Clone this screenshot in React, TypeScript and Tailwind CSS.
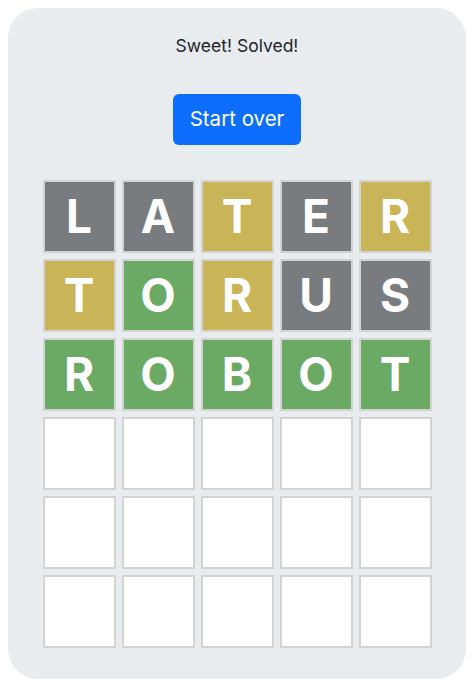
const rows: { letter: string; state: "absent" | "present" | "correct" }[][] = [
  [
    { letter: "L", state: "absent" },
    { letter: "A", state: "absent" },
    { letter: "T", state: "present" },
    { letter: "E", state: "absent" },
    { letter: "R", state: "present" },
  ],
  [
    { letter: "T", state: "present" },
    { letter: "O", state: "correct" },
    { letter: "R", state: "present" },
    { letter: "U", state: "absent" },
    { letter: "S", state: "absent" },
  ],
  [
    { letter: "R", state: "correct" },
    { letter: "O", state: "correct" },
    { letter: "B", state: "correct" },
    { letter: "O", state: "correct" },
    { letter: "T", state: "correct" },
  ],
];

const stateClass = {
  absent: "bg-[#787c7e] text-white",
  present: "bg-[#c9b458] text-white",
  correct: "bg-[#6aaa64] text-white",
};

export default function App() {
  const grid = Array.from({ length: 6 }, (_, r) => rows[r] ?? null);

  return (
    <div className="p-2 bg-white" style={{ fontFamily: "Inter, 'Noto Sans', sans-serif" }}>
      <div className="rounded-[30px] bg-[#e9ecef] pt-[26px] pb-[31px] flex flex-col items-center">
        <p className="text-[17.5px] leading-6 text-[#212529]">Sweet! Solved!</p>
        <button className="mt-[36px] h-[51px] px-[17px] rounded-md bg-[#0d6efd] text-white text-[20.5px]">
          Start over
        </button>
        <div className="mt-[35px] flex flex-col gap-[6px]">
          {grid.map((row, r) => (
            <div key={r} className="flex gap-[6px]">
              {Array.from({ length: 5 }, (_, c) => {
                const cell = row?.[c];
                return (
                  <div
                    key={c}
                    className={
                      "w-[73px] h-[73px] border-2 border-[#d3d3d3] flex items-center justify-center text-[46px] font-bold " +
                      (cell ? stateClass[cell.state] : "bg-white")
                    }
                  >
                    {cell?.letter}
                  </div>
                );
              })}
            </div>
          ))}
        </div>
      </div>
    </div>
  );
}
